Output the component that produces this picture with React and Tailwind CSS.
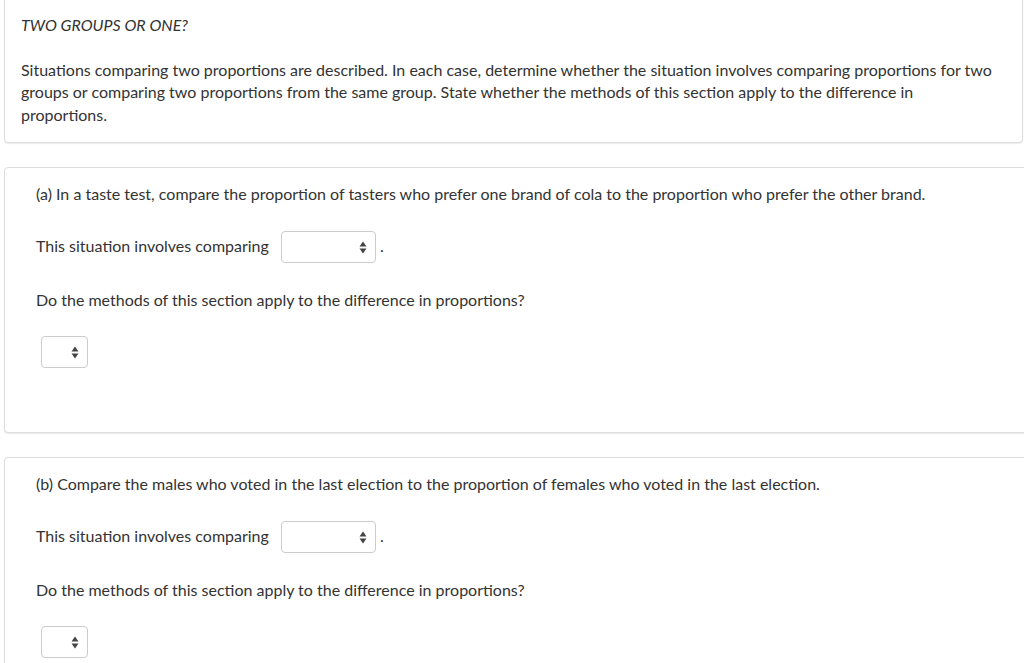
export default function App() {
  const Arrows = () => (
    <svg width="8" height="13" viewBox="0 0 8 13" className="absolute right-[8px] top-[9px]">
      <path d="M4 0.5 L7.5 5.5 L0.5 5.5 Z" fill="#444" />
      <path d="M4 12.5 L7.5 7.5 L0.5 7.5 Z" fill="#444" />
    </svg>
  );
  const Part = ({ label }) => (
    <div className="w-[1040px] h-[266px] ml-[4px] rounded-[4px] border border-[#dddddd] bg-white shadow-[0_1px_1px_rgba(0,0,0,0.08)] pl-[31px]">
      <p className="mt-[15px]">{label}</p>
      <div className="mt-[25px] flex items-center h-[32px]">
        <span>This situation involves comparing</span>
        <span className="ml-[12px] flex items-center">
          <span className="relative inline-block h-[32px] w-[95px] rounded-[4px] border border-[#cccccc] bg-white">
            <Arrows />
          </span>
          <span className="ml-[4px]">.</span>
        </span>
      </div>
      <p className="mt-[26px]">Do the methods of this section apply to the difference in proportions?</p>
      <div className="mt-[25px] ml-[5px]">
        <span className="relative block h-[32px] w-[47px] rounded-[4px] border border-[#cccccc] bg-white">
          <Arrows />
        </span>
      </div>
    </div>
  );
  return (
    <div className="w-[1024px] h-[663px] overflow-hidden bg-white text-[#333333] text-[16px] leading-[22.5px]" style={{ fontFamily: "Lato, 'Open Sans', sans-serif" }}>
      <div className="-mt-[10px] ml-[4px] w-[1019px] h-[153px] rounded-[4px] border border-[#dddddd] bg-white shadow-[0_1px_1px_rgba(0,0,0,0.08)] pl-[16px] pr-[25px]">
        <p className="mt-[23px] italic">TWO GROUPS OR ONE?</p>
        <p className="mt-[22px]">
          Situations comparing two proportions are described. In each case, determine whether the situation involves comparing proportions for two groups or comparing two proportions from the same group. State whether the methods of this section apply to the difference in proportions.
        </p>
      </div>
      <div className="mt-[24px]">
        <Part label="(a) In a taste test, compare the proportion of tasters who prefer one brand of cola to the proportion who prefer the other brand." />
      </div>
      <div className="mt-[24px]">
        <Part label="(b) Compare the males who voted in the last election to the proportion of females who voted in the last election." />
      </div>
    </div>
  );
}
